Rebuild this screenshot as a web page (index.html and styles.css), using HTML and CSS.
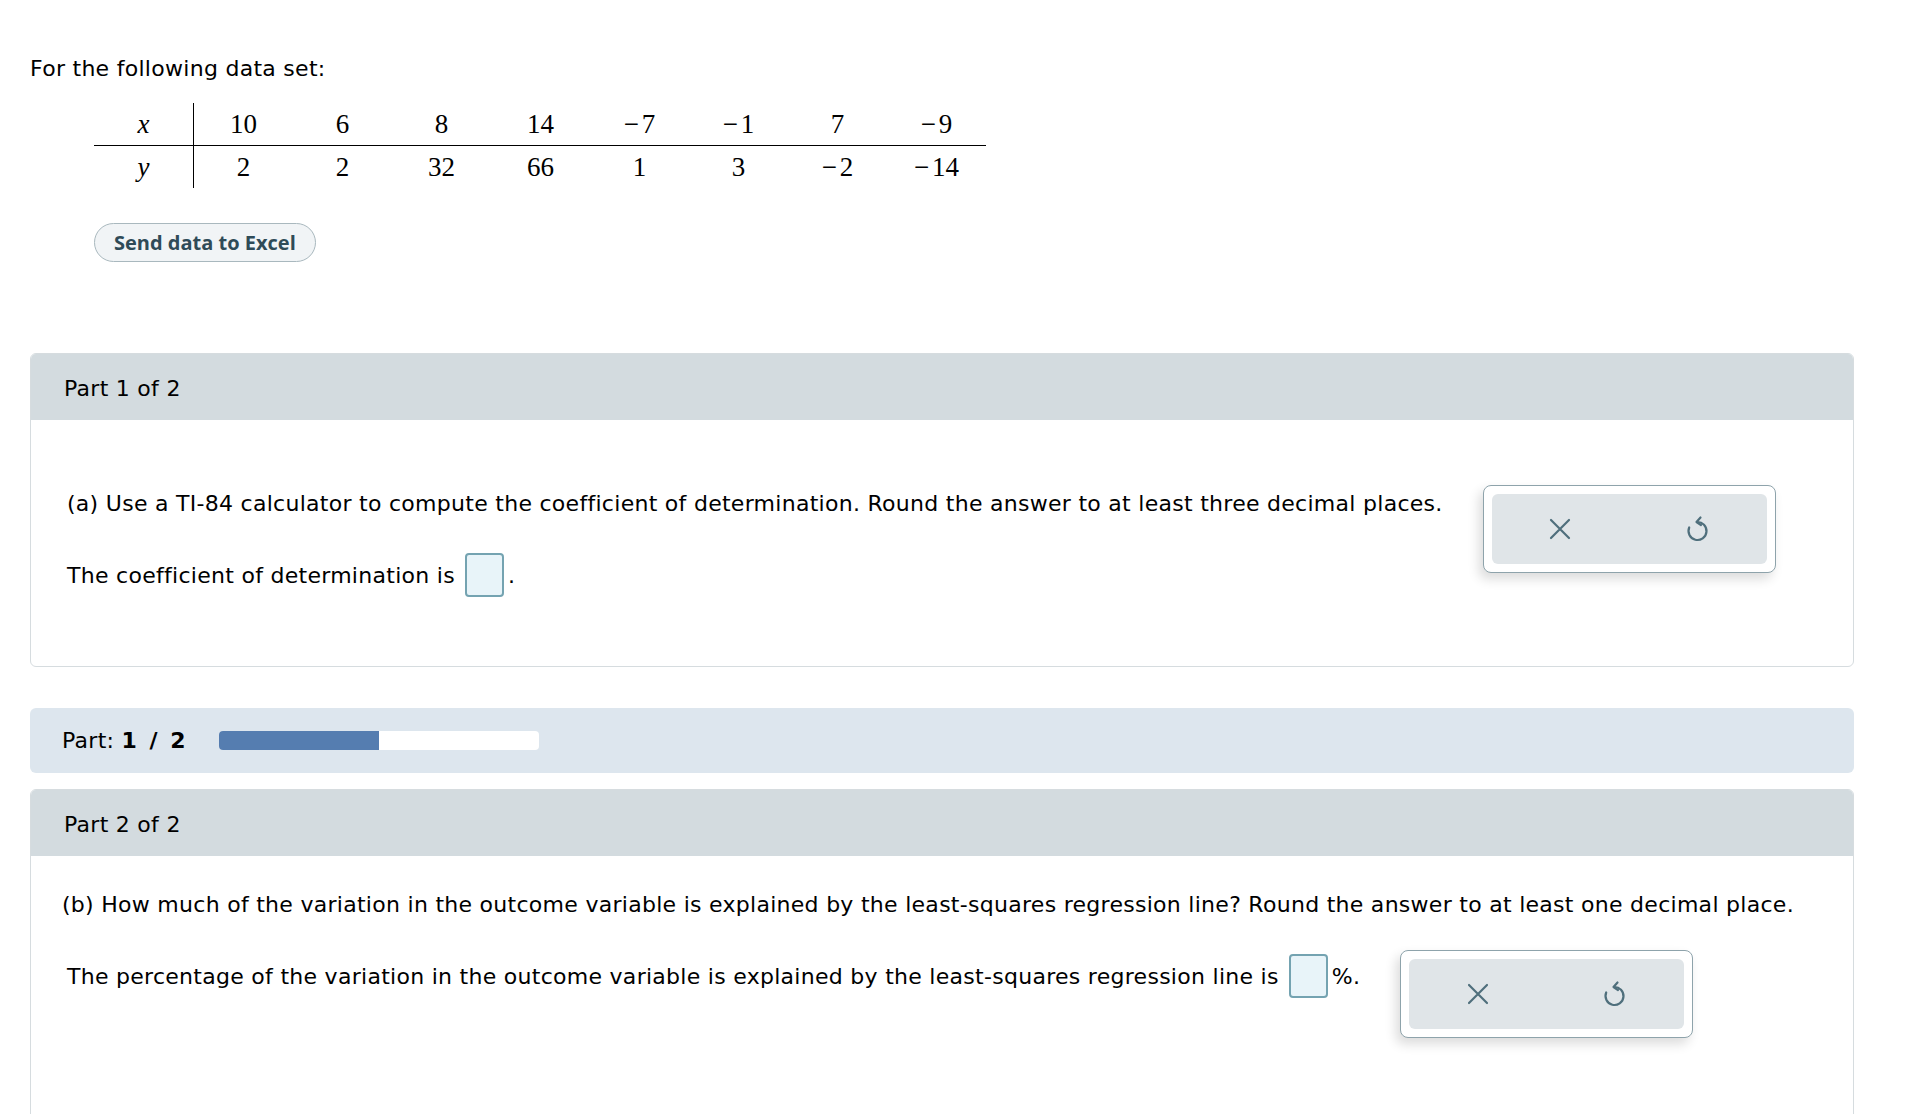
FILE: index.html
```html
<!DOCTYPE html>
<html lang="en">
<head>
<meta charset="utf-8">
<title>Coefficient of determination</title>
<link rel="stylesheet" href="styles.css">
</head>
<body>
<div class="page">
  <p class="intro">For the following data set:</p>
  <table class="data">
    <tr>
      <td class="lbl">x</td><td>10</td><td>6</td><td>8</td><td>14</td><td><span class="m">−</span>7</td><td><span class="m">−</span>1</td><td>7</td><td><span class="m">−</span>9</td>
    </tr>
    <tr>
      <td class="lbl">y</td><td>2</td><td>2</td><td>32</td><td>66</td><td>1</td><td>3</td><td><span class="m">−</span>2</td><td><span class="m">−</span>14</td>
    </tr>
  </table>
  <button class="excel-btn" type="button">Send data to Excel</button>

  <section class="part part-one">
    <div class="part-head">Part 1 of 2</div>
    <div class="part-body row">
      <div class="q-col">
        <p class="question">(a) Use a TI-84 calculator to compute the coefficient of determination. Round the answer to at least three decimal places.</p>
        <div class="answer">
          <span>The coefficient of determination is</span>
          <span class="ans-box"></span>
          <span class="after">.</span>
        </div>
      </div>
      <div class="actions">
        <div class="actions-inner">
          <button class="act" type="button" aria-label="Clear">
            <svg width="22" height="22" viewBox="0 0 22 22"><path d="M2 2 L20 20 M20 2 L2 20" stroke="#4f6f7c" stroke-width="2.2" fill="none" stroke-linecap="round"/></svg>
          </button>
          <button class="act" type="button" aria-label="Undo">
            <svg width="24" height="28" viewBox="0 0 24 28"><path d="M11 7 A9 9 0 1 1 3.2 12.5" stroke="#4f6f7c" stroke-width="2.2" fill="none" stroke-linecap="round"/><path d="M14.5 2.5 L10.5 7 L15 10" stroke="#4f6f7c" stroke-width="2.2" fill="none" stroke-linecap="round" stroke-linejoin="round"/></svg>
          </button>
        </div>
      </div>
    </div>
  </section>

  <div class="progress">
    <span class="prog-label">Part: <b>1 / 2</b></span>
    <div class="bar"><div class="fill" style="width:50%"></div></div>
  </div>

  <section class="part part-two">
    <div class="part-head">Part 2 of 2</div>
    <div class="part-body body-two">
      <p class="question q-b">(b) How much of the variation in the outcome variable is explained by the least-squares regression line? Round the answer to at least one decimal place.</p>
      <div class="row row-b">
        <div class="answer answer-b">
          <span>The percentage of the variation in the outcome variable is explained by the least-squares regression line is</span>
          <span class="ans-box"></span>
          <span class="after pct">%.</span>
        </div>
        <div class="actions">
          <div class="actions-inner">
            <button class="act" type="button" aria-label="Clear">
              <svg width="22" height="22" viewBox="0 0 22 22"><path d="M2 2 L20 20 M20 2 L2 20" stroke="#4f6f7c" stroke-width="2.2" fill="none" stroke-linecap="round"/></svg>
            </button>
            <button class="act" type="button" aria-label="Undo">
              <svg width="24" height="28" viewBox="0 0 24 28"><path d="M11 7 A9 9 0 1 1 3.2 12.5" stroke="#4f6f7c" stroke-width="2.2" fill="none" stroke-linecap="round"/><path d="M14.5 2.5 L10.5 7 L15 10" stroke="#4f6f7c" stroke-width="2.2" fill="none" stroke-linecap="round" stroke-linejoin="round"/></svg>
            </button>
          </div>
        </div>
      </div>
    </div>
  </section>
</div>
</body>
</html>
```
FILE: styles.css
```css
body {
  margin: 0;
  background: #fff;
  color: #000;
  font-family: "DejaVu Sans", Verdana, sans-serif;
  font-size: 22px;
  line-height: 33px;
  letter-spacing: 0.28px;
}

.page {
  padding: 52px 62px 0 30px;
}

.intro {
  margin: 0;
}

.data {
  margin: 18px 0 0 64px;
  border-collapse: collapse;
  font-family: "Liberation Serif", "Times New Roman", serif;
  font-size: 27px;
  letter-spacing: 0;
}

.data td {
  width: 99px;
  height: 42px;
  padding: 0;
  text-align: center;
  line-height: 42px;
}

.data .m {
  padding-right: 3px;
}

.data .lbl {
  font-style: italic;
  border-right: 1px solid #000;
}

.data tr:first-child td {
  border-bottom: 1px solid #000;
}

.excel-btn {
  display: block;
  margin: 35px 0 0 64px;
  height: 39px;
  padding: 0 19px;
  border: 1px solid #a9b8be;
  border-radius: 20px;
  background: #f1f4f6;
  color: #2f4b58;
  font-family: "Open Sans", Lato, sans-serif;
  font-weight: 700;
  font-size: 20px;
  letter-spacing: 0;
}

.part {
  margin-top: 91px;
  border: 1px solid #d6dcdf;
  border-radius: 6px;
  overflow: hidden;
}

.part-head {
  height: 66px;
  box-sizing: border-box;
  padding: 18px 0 0 33px;
  background: #d3dbdf;
}

.row {
  display: flex;
  align-items: flex-start;
  gap: 40px;
}

.part-one .part-body {
  padding: 65px 0 69px 36px;
}

.q-col {
  padding-top: 2px;
}

.question {
  margin: 0;
}

.answer {
  display: flex;
  align-items: center;
  height: 44px;
  margin-top: 33px;
  white-space: nowrap;
}

.ans-box {
  width: 39px;
  height: 44px;
  box-sizing: border-box;
  margin-left: 10px;
  border: 2px solid #74a3b1;
  border-radius: 4px;
  background: #e8f4f9;
}

.after {
  margin-left: 4px;
}

.pct {
  margin-left: 4px;
}

.actions {
  flex: none;
  padding: 8px;
  border: 1px solid #8ea3ab;
  border-radius: 8px;
  background: #fff;
  box-shadow: -4px 6px 12px rgba(0, 0, 0, 0.14);
}

.actions-inner {
  display: flex;
  width: 275px;
  height: 70px;
  border-radius: 6px;
  background: #e0e5e8;
}

.act {
  flex: 1;
  display: flex;
  align-items: center;
  justify-content: center;
  padding: 0;
  border: 0;
  background: transparent;
}

.progress {
  display: flex;
  align-items: center;
  height: 65px;
  margin-top: 41px;
  padding-left: 32px;
  border-radius: 6px;
  background: #dde6ee;
}

.prog-label b {
  letter-spacing: 1px;
  word-spacing: 3px;
}

.bar {
  width: 320px;
  height: 19px;
  margin-left: 32px;
  border-radius: 4px;
  background: #fff;
  overflow: hidden;
}

.fill {
  height: 100%;
  background: #557db0;
}

.part-two {
  margin-top: 16px;
}

.body-two {
  padding: 32px 0 90px 0;
}

.q-b {
  padding-left: 31px;
}

.row-b {
  margin-top: 29px;
  padding-left: 36px;
}

.answer-b {
  margin-top: 4px;
}
```
